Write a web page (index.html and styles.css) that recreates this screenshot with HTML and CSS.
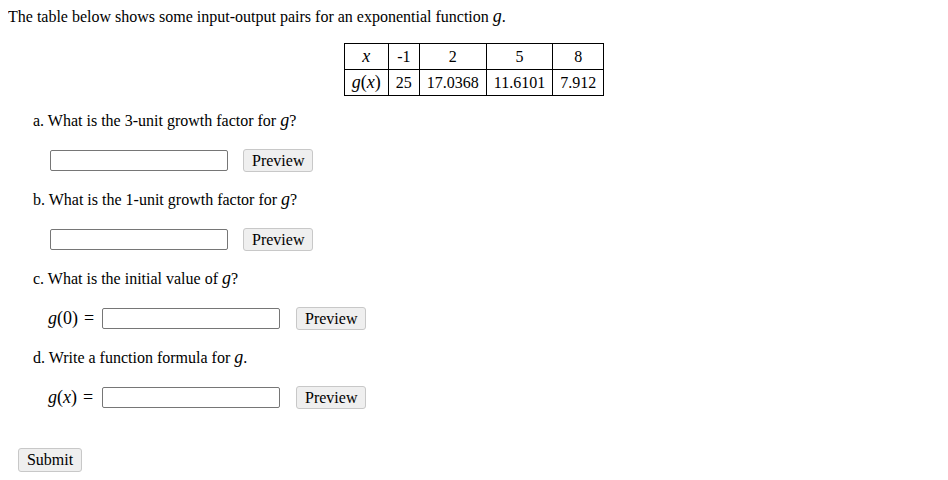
FILE: index.html
```html
<!DOCTYPE html>
<html>
<head>
<meta charset="utf-8">
<link rel="stylesheet" href="styles.css">
</head>
<body>
<p class="intro">The table below shows some input-output pairs for an exponential function <i class="mv">g</i>.</p>
<table class="data">
  <tr><td><i class="mv">x</i></td><td>-1</td><td>2</td><td>5</td><td>8</td></tr>
  <tr><td><i class="mv">g</i><span class="mp">(</span><i class="mv">x</i><span class="mp">)</span></td><td>25</td><td>17.0368</td><td>11.6101</td><td>7.912</td></tr>
</table>

<div class="question">
  <p class="qtext">a. What is the 3-unit growth factor for <i class="mv">g</i>?</p>
  <div class="answer">
    <input class="field" type="text">
    <button class="btn">Preview</button>
  </div>
</div>

<div class="question">
  <p class="qtext">b. What is the 1-unit growth factor for <i class="mv">g</i>?</p>
  <div class="answer">
    <input class="field" type="text">
    <button class="btn">Preview</button>
  </div>
</div>

<div class="question">
  <p class="qtext">c. What is the initial value of <i class="mv">g</i>?</p>
  <div class="answer answer-math">
    <span class="lhs"><i class="mv">g</i><span class="mp">(0)</span><span class="eq">=</span></span>
    <input class="field" type="text">
    <button class="btn">Preview</button>
  </div>
</div>

<div class="question">
  <p class="qtext">d. Write a function formula for <i class="mv">g</i>.</p>
  <div class="answer answer-math">
    <span class="lhs"><i class="mv">g</i><span class="mp">(</span><i class="mv">x</i><span class="mp">)</span><span class="eq">=</span></span>
    <input class="field" type="text">
    <button class="btn">Preview</button>
  </div>
</div>

<div class="submit-row">
  <button class="btn submit">Submit</button>
</div>
</body>
</html>
```

FILE: styles.css
```css
body {
  margin: 8px;
  font-family: "Liberation Serif", "Times New Roman", serif;
  font-size: 16px;
  color: #000;
  background: #fff;
}
.intro {
  margin: 0;
  line-height: 18px;
}
.mv {
  font-family: "Liberation Serif", serif;
  font-style: italic;
  font-size: 18px;
  line-height: 0;
}
.mp {
  font-family: "Liberation Serif", serif;
  font-size: 18px;
  line-height: 0;
}
.data {
  border-collapse: collapse;
  margin: 17px auto 0;
}
.data td {
  border: 1px solid #000;
  padding: 0 7px;
  height: 25px;
  text-align: center;
  line-height: 18px;
  font-size: 16px;
}
.question {
  margin-left: 25px;
  margin-bottom: 19px;
}
.question:first-of-type {
  margin-top: 16px;
}
.qtext {
  margin: 0;
  line-height: 18px;
}
.answer {
  margin-top: 19px;
  margin-left: 17px;
  display: flex;
  align-items: center;
  gap: 15px;
  height: 23px;
}
.answer-math {
  margin-left: 15px;
  gap: 0;
}
.lhs {
  width: 54px;
  white-space: nowrap;
  line-height: 18px;
}
.eq {
  font-size: 18px;
  margin-left: 6px;
  line-height: 0;
}
.answer-math .btn {
  margin-left: 16px;
}
.field {
  box-sizing: border-box;
  width: 178px;
  height: 21px;
  border: 1px solid #767676;
  border-radius: 2px;
  padding: 1px 2px;
  margin: 0;
  background: #fff;
}
.btn {
  box-sizing: border-box;
  height: 23px;
  padding: 0 8px;
  margin: 0;
  font-family: "Liberation Serif", "Times New Roman", serif;
  font-size: 16px;
  color: #000;
  background: #efefef;
  border: 1px solid #c8c8c8;
  border-radius: 3px;
}
.submit-row {
  margin-top: 39px;
  margin-left: 10px;
}
.submit {
  height: 24px;
  width: 64px;
  padding: 0;
}
```
